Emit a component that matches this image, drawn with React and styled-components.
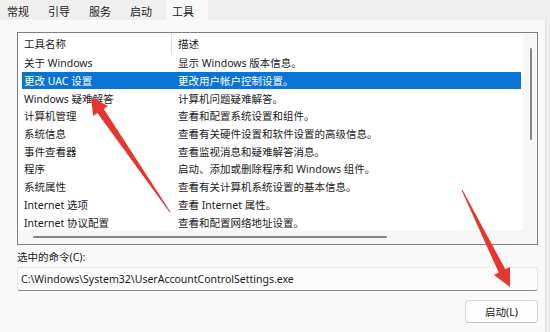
import React from 'react';
import styled, { createGlobalStyle } from 'styled-components';

const GlobalStyle = createGlobalStyle`
  html, body {
    margin: 0;
    padding: 0;
    background: #f0f0f0;
  }
  * {
    box-sizing: border-box;
  }
`;

const Window = styled.div`
  position: relative;
  width: 550px;
  height: 332px;
  display: flex;
  flex-direction: column;
  overflow: hidden;
  font-family: "Noto Sans", "Noto Sans CJK SC", sans-serif;
  font-size: 10.5px;
  color: #1b1b1b;
  background: #efefef;
`;

const TabBar = styled.div`
  height: 20px;
  display: flex;
  align-items: stretch;
  background: #efefef;
`;

const Tab = styled.div`
  width: ${p => (p.$active ? '42px' : '41px')};
  margin-left: ${p => (p.$active ? '2px' : '0')};
  padding: 3px 0 0 ${p => (p.$active ? '6px' : '7px')};
  display: flex;
  align-items: center;
  background: ${p => (p.$active ? '#f9f9f9' : 'transparent')};
  font-size: 11px;
  line-height: 1;
`;

const Page = styled.div`
  flex: 1;
  display: flex;
  flex-direction: column;
  margin-right: 4px;
  padding: 12px 7px 0 17px;
  background: #f9f9f9;
  border-right: 1px solid #e4e4e4;
`;

const ListBox = styled.div`
  height: 213px;
  border: 1px solid #7f7f7f;
  background: #f4f4f4;
  display: grid;
  grid-template-columns: 1fr 14px;
  grid-template-rows: 1fr 14px;
`;

const ListContent = styled.div`
  background: #ffffff;
  overflow: hidden;
`;

const HeaderRow = styled.div`
  height: 21px;
  display: grid;
  grid-template-columns: 154px 1fr;
  margin-left: 4px;
`;

const HeaderCell = styled.div`
  display: flex;
  align-items: center;
  padding-left: 2px;
  border-right: ${p => (p.$divider ? '1px solid #d9d9d9' : 'none')};
  margin-right: ${p => (p.$divider ? '4px' : '0')};
`;

const Row = styled.div`
  height: 17.7px;
  display: grid;
  grid-template-columns: 154px 1fr;
  margin: 0 2px 0 4px;
  align-items: center;
  background: ${p => (p.$selected ? '#0a74d4' : 'transparent')};
  color: ${p => (p.$selected ? '#ffffff' : 'inherit')};
`;

const Cell = styled.div`
  padding-left: 2px;
  white-space: nowrap;
  overflow: hidden;
`;

const VTrack = styled.div`
  background: #f6f6f6;
  display: flex;
  justify-content: center;
  padding-top: 15px;
`;

const VThumb = styled.div`
  width: 2px;
  height: 92px;
  margin-left: 1px;
  background: #858585;
  border-radius: 1px;
`;

const HTrack = styled.div`
  background: #f6f6f6;
  display: flex;
  align-items: center;
  padding-left: 15px;
`;

const HThumb = styled.div`
  width: 354px;
  height: 2px;
  background: #858585;
  border-radius: 1px;
`;

const Corner = styled.div`
  background: #f6f6f6;
`;

const Label = styled.div`
  margin-top: 3px;
  height: 16px;
  display: flex;
  align-items: center;
`;

const CommandBox = styled.div`
  margin-top: 3px;
  height: 24px;
  display: flex;
  align-items: center;
  padding-left: 3px;
  background: #fbfbfb;
  border: 1px solid #e6e6e6;
  border-bottom: 1px solid #8a8a8a;
  border-radius: 3px;
`;

const Footer = styled.div`
  display: flex;
  justify-content: flex-end;
  margin-top: 9px;
`;

const Button = styled.div`
  width: 73px;
  height: 23px;
  display: flex;
  align-items: center;
  justify-content: center;
  background: #fdfdfd;
  border: 1px solid #d6d6d6;
  border-bottom-color: #c4c4c4;
  border-radius: 4px;
`;

const Overlay = styled.svg`
  position: absolute;
  left: 0;
  top: 0;
  pointer-events: none;
`;

const tabs = ['常规', '引导', '服务', '启动', '工具'];

const tools = [
  ['关于 Windows', '显示 Windows 版本信息。'],
  ['更改 UAC 设置', '更改用户帐户控制设置。'],
  ['Windows 疑难解答', '计算机问题疑难解答。'],
  ['计算机管理', '查看和配置系统设置和组件。'],
  ['系统信息', '查看有关硬件设置和软件设置的高级信息。'],
  ['事件查看器', '查看监视消息和疑难解答消息。'],
  ['程序', '启动、添加或删除程序和 Windows 组件。'],
  ['系统属性', '查看有关计算机系统设置的基本信息。'],
  ['Internet 选项', '查看 Internet 属性。'],
  ['Internet 协议配置', '查看和配置网络地址设置。'],
];

const Arrows = () => (
  <Overlay width="550" height="332" viewBox="0 0 550 332">
    <polygon
      fill="#e5372f"
      points="91,97 108,105.9 103.8,109 170.4,211.7 169.6,212.3 97.4,113 93.2,116.1"
    />
    <polygon
      fill="#e5372f"
      points="510,287 493.9,274.9 498.7,272.6 461.6,190.2 462.4,189.8 505.3,269.2 510.1,266.9"
    />
  </Overlay>
);

const App = () => {
  return (
    <Window>
      <GlobalStyle />
      <TabBar>
        {tabs.map((t, i) => (
          <Tab key={t} $active={i === tabs.length - 1}>
            {t}
          </Tab>
        ))}
      </TabBar>
      <Page>
        <ListBox>
          <ListContent>
            <HeaderRow>
              <HeaderCell $divider>工具名称</HeaderCell>
              <HeaderCell>描述</HeaderCell>
            </HeaderRow>
            {tools.map(([name, desc], i) => (
              <Row key={name} $selected={i === 1}>
                <Cell>{name}</Cell>
                <Cell>{desc}</Cell>
              </Row>
            ))}
          </ListContent>
          <VTrack>
            <VThumb />
          </VTrack>
          <HTrack>
            <HThumb />
          </HTrack>
          <Corner />
        </ListBox>
        <Label>选中的命令(C):</Label>
        <CommandBox>C:\Windows\System32\UserAccountControlSettings.exe</CommandBox>
        <Footer>
          <Button>启动(L)</Button>
        </Footer>
      </Page>
      <Arrows />
    </Window>
  );
};

export default App;
